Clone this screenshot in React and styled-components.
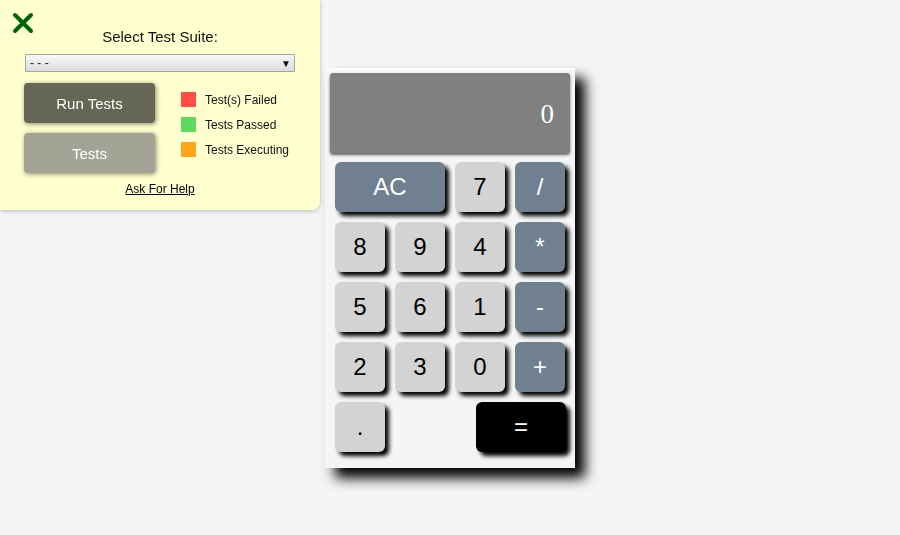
import React from "react";
import styled, { createGlobalStyle } from "styled-components";

const GlobalStyle = createGlobalStyle`
  body {
    margin: 0;
    background-color: #f5f5f5;
    font-family: "Liberation Sans", Arial, sans-serif;
  }
`;

const Page = styled.div`
  min-height: 100vh;
  box-sizing: border-box;
  padding-top: 68px;
`;

// Test suite panel (fixed overlay in the top-left corner)
const SuitePanel = styled.div`
  position: fixed;
  top: 0;
  left: 0;
  z-index: 10;
  width: 320px;
  height: 210px;
  box-sizing: border-box;
  padding-top: 27px;
  background-color: rgba(255, 255, 204, 0.92);
  border-bottom-right-radius: 8px;
  box-shadow: 0 1px 4px rgba(0, 0, 0, 0.25);
  display: flex;
  flex-direction: column;
  align-items: center;
`;

const CloseButton = styled.button`
  position: absolute;
  top: 12px;
  left: 12px;
  width: 22px;
  height: 22px;
  padding: 0;
  border: none;
  background: none;
  cursor: pointer;
`;

const SuiteTitle = styled.div`
  font-size: 15px;
  line-height: 20px;
  color: #111;
`;

const SuiteSelect = styled.div`
  margin-top: 7px;
  width: 270px;
  height: 18px;
  box-sizing: border-box;
  border: 1px solid #a4a4a4;
  border-radius: 1px;
  background: linear-gradient(#f8f8f8, #dcdcdc);
  display: flex;
  align-items: center;
  justify-content: space-between;
  padding: 0 3px 0 4px;
  font-size: 12px;
  color: #222;
`;

const Arrow = styled.span`
  font-size: 10px;
  color: #111;
`;

const SuiteBody = styled.div`
  align-self: stretch;
  margin-top: 11px;
  padding-left: 24px;
  display: flex;
  gap: 26px;
`;

const ButtonColumn = styled.div`
  display: flex;
  flex-direction: column;
  gap: 10px;
`;

const SuiteButton = styled.button`
  width: 131px;
  height: 40px;
  border: none;
  border-radius: 4px;
  background-color: ${(props) => (props.muted ? "#a3a396" : "#666657")};
  color: #fff;
  font-family: "Liberation Sans", Arial, sans-serif;
  font-size: 15px;
  box-shadow: 1px 1px 5px rgba(60, 60, 30, 0.6);
  cursor: pointer;
`;

const Legend = styled.div`
  margin-top: 9px;
  display: flex;
  flex-direction: column;
  gap: 10px;
`;

const LegendRow = styled.div`
  display: flex;
  align-items: center;
  gap: 9px;
  height: 15px;
  font-size: 12px;
  color: #111;
`;

const Swatch = styled.span`
  width: 15px;
  height: 15px;
  background-color: ${(props) => props.color};
`;

const HelpLink = styled.a`
  margin-top: 9px;
  font-size: 12px;
  line-height: 14px;
  color: #000;
  text-decoration: underline;
`;

// Calculator
const Calculator = styled.div`
  width: 250px;
  height: 400px;
  box-sizing: border-box;
  margin: 0 auto;
  padding: 5px;
  background-color: #f5f5f5;
  border-top: 2px solid #fbfbfb;
  box-shadow: 10px 10px 12px #000;
`;

const Display = styled.div`
  height: 80px;
  box-sizing: border-box;
  margin-top: -2px;
  padding: 3px 16px 0 0;
  background-color: #808080;
  border-radius: 3px;
  box-shadow: 0 2px 3px rgba(0, 0, 0, 0.6);
  display: flex;
  align-items: center;
  justify-content: flex-end;
  color: #fff;
  font-family: "Liberation Serif", "Times New Roman", serif;
  font-size: 27px;
`;

const Keypad = styled.div`
  margin-top: 9px;
  padding-left: 5px;
  display: grid;
  grid-template-columns: repeat(4, 50px);
  grid-auto-rows: 50px;
  gap: 10px;
`;

const keyColors = {
  digit: { bg: "#d3d3d3", fg: "#000" },
  op: { bg: "#708090", fg: "#fff" },
  equals: { bg: "#000", fg: "#fff" },
};

const Key = styled.button`
  grid-column: ${(props) => props.span || "auto"};
  justify-self: ${(props) => (props.wide ? "end" : "stretch")};
  width: ${(props) => (props.wide ? "90px" : "auto")};
  margin-right: ${(props) => (props.wide ? "-1px" : "0")};
  border: none;
  border-radius: 6px;
  background-color: ${(props) => keyColors[props.kind].bg};
  color: ${(props) => keyColors[props.kind].fg};
  font-family: "Liberation Sans", Arial, sans-serif;
  font-size: 24px;
  box-shadow: 4px 4px 4px #000;
  cursor: pointer;
  padding: 0;
`;

const keys = [
  { label: "AC", kind: "op", span: "span 2" },
  { label: "7", kind: "digit" },
  { label: "/", kind: "op" },
  { label: "8", kind: "digit" },
  { label: "9", kind: "digit" },
  { label: "4", kind: "digit" },
  { label: "*", kind: "op" },
  { label: "5", kind: "digit" },
  { label: "6", kind: "digit" },
  { label: "1", kind: "digit" },
  { label: "-", kind: "op" },
  { label: "2", kind: "digit" },
  { label: "3", kind: "digit" },
  { label: "0", kind: "digit" },
  { label: "+", kind: "op" },
  { label: ".", kind: "digit" },
  { label: "=", kind: "equals", span: "3 / span 2", wide: true },
];

const CloseIcon = () => (
  <svg width="22" height="22" viewBox="0 0 22 22">
    <path
      d="M3 3 L19 19 M19 3 L3 19"
      stroke="#006400"
      strokeWidth="4"
      strokeLinecap="round"
      fill="none"
    />
  </svg>
);

const App = () => {
  return (
    <Page>
      <GlobalStyle />
      <SuitePanel>
        <CloseButton aria-label="close">
          <CloseIcon />
        </CloseButton>
        <SuiteTitle>Select Test Suite:</SuiteTitle>
        <SuiteSelect>
          <span>- - -</span>
          <Arrow>▼</Arrow>
        </SuiteSelect>
        <SuiteBody>
          <ButtonColumn>
            <SuiteButton>Run Tests</SuiteButton>
            <SuiteButton muted>Tests</SuiteButton>
          </ButtonColumn>
          <Legend>
            <LegendRow>
              <Swatch color="#ff4f44" />
              Test(s) Failed
            </LegendRow>
            <LegendRow>
              <Swatch color="#5fd85f" />
              Tests Passed
            </LegendRow>
            <LegendRow>
              <Swatch color="#ffa31a" />
              Tests Executing
            </LegendRow>
          </Legend>
        </SuiteBody>
        <HelpLink href="#">Ask For Help</HelpLink>
      </SuitePanel>

      <Calculator>
        <Display>0</Display>
        <Keypad>
          {keys.map((k) => (
            <Key key={k.label} kind={k.kind} span={k.span} wide={k.wide}>
              {k.label}
            </Key>
          ))}
        </Keypad>
      </Calculator>
    </Page>
  );
};

export default App;
